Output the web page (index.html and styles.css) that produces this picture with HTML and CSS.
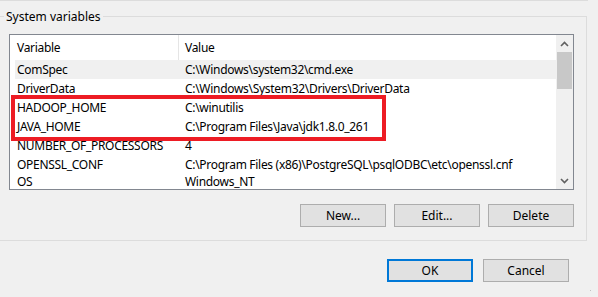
FILE: index.html
```html
<!DOCTYPE html>
<html lang="en">
<head>
    <meta charset="UTF-8">
    <title>Environment Variables</title>
    <link rel="stylesheet" href="styles.css">
</head>
<body>
    <div class="top-rule"></div>

    <fieldset class="group">
        <legend>System variables</legend>

        <div class="listview">
            <div class="lv-main">
                <div class="lv-row lv-head">
                    <span class="cell">Variable</span>
                    <span class="cell cell-value">Value</span>
                </div>
                <div class="lv-row selected">
                    <span class="cell">ComSpec</span>
                    <span class="cell cell-value">C:\Windows\system32\cmd.exe</span>
                </div>
                <div class="lv-row">
                    <span class="cell">DriverData</span>
                    <span class="cell cell-value">C:\Windows\System32\Drivers\DriverData</span>
                </div>
                <div class="lv-row">
                    <span class="cell">HADOOP_HOME</span>
                    <span class="cell cell-value">C:\winutilis</span>
                </div>
                <div class="lv-row">
                    <span class="cell">JAVA_HOME</span>
                    <span class="cell cell-value">C:\Program Files\Java\jdk1.8.0_261</span>
                </div>
                <div class="lv-row">
                    <span class="cell">NUMBER_OF_PROCESSORS</span>
                    <span class="cell cell-value">4</span>
                </div>
                <div class="lv-row">
                    <span class="cell">OPENSSL_CONF</span>
                    <span class="cell cell-value">C:\Program Files (x86)\PostgreSQL\psqlODBC\etc\openssl.cnf</span>
                </div>
                <div class="lv-row lv-last">
                    <span class="cell">OS</span>
                    <span class="cell cell-value">Windows_NT</span>
                </div>
            </div>

            <!-- scrollbar -->
            <div class="scrollbar">
                <div class="sb-arrow">
                    <svg width="9" height="6" viewBox="0 0 9 6"><path d="M1 5 L4.5 1.5 L8 5" fill="none" stroke="#606060" stroke-width="1.6"/></svg>
                </div>
                <div class="sb-track">
                    <div class="sb-thumb"></div>
                </div>
                <div class="sb-arrow">
                    <svg width="9" height="6" viewBox="0 0 9 6"><path d="M1 1 L4.5 4.5 L8 1" fill="none" stroke="#606060" stroke-width="1.6"/></svg>
                </div>
            </div>

            <!-- red highlight drawn over the list -->
            <div class="mark"></div>
        </div>

        <div class="button-row group-buttons">
            <button class="btn">New...</button>
            <button class="btn">Edit...</button>
            <button class="btn">Delete</button>
        </div>
    </fieldset>

    <div class="button-row dialog-buttons">
        <button class="btn btn-default">OK</button>
        <button class="btn">Cancel</button>
    </div>

    <div class="grip"></div>
</body>
</html>
```

FILE: styles.css
```css
body {
    margin: 0;
    width: 598px;
    height: 297px;
    background: #f0f0f0;
    font-family: 'Noto Sans', sans-serif;
    font-size: 12px;
    letter-spacing: -0.3px;
    color: #000;
    overflow: hidden;
    position: relative;
}

.top-rule {
    width: 587px;
    height: 0;
    border-bottom: 1px solid #dcdcdc;
    border-right: 1px solid #dcdcdc;
}

.group {
    margin: 7px 0 0 0;
    width: 587px;
    box-sizing: border-box;
    padding: 0 12px 13px 9px;
    border: 1px solid #dcdcdc;
    border-left: none;
}

.group legend {
    margin-left: -5px;
    padding: 0 2px;
    line-height: 17px;
    letter-spacing: 0;
}

.listview {
    position: relative;
    display: flex;
    height: 156px;
    margin-top: 9px;
    border: 1px solid #828790;
    background: #fff;
    box-sizing: border-box;
}

.lv-main {
    flex: 1;
    overflow: hidden;
    padding-left: 5px;
}

.lv-row {
    display: grid;
    grid-template-columns: 163px 1fr;
    height: 19px;
    line-height: 19px;
    white-space: nowrap;
}

.lv-head {
    height: 25px;
    line-height: 25px;
}

.lv-last {
    line-height: 16px;
}

.lv-head .cell-value {
    border-left: 1px solid #e5e5e5;
    padding-left: 6px;
}

.cell {
    padding-left: 2px;
    overflow: hidden;
}

.cell-value {
    padding-left: 7px;
}

.selected {
    background: #f0f0f0;
}

.scrollbar {
    width: 17px;
    display: flex;
    flex-direction: column;
    background: #f0f0f0;
}

.sb-arrow {
    height: 17px;
    display: flex;
    align-items: center;
    justify-content: center;
}

.sb-track {
    flex: 1;
    padding: 0 1px;
}

.sb-thumb {
    height: 37px;
    background: #c8c8c8;
}

.mark {
    position: absolute;
    left: 1px;
    top: 60px;
    width: 375px;
    height: 46px;
    border: 4px solid #ed1c24;
    box-sizing: border-box;
}

.button-row {
    display: flex;
    justify-content: flex-end;
}

.group-buttons {
    gap: 8px;
    margin-top: 14px;
}

.dialog-buttons {
    gap: 10px;
    margin-top: 18px;
    width: 569px;
}

.btn {
    width: 86px;
    height: 23px;
    background: #e1e1e1;
    border: 1px solid #adadad;
    font-family: inherit;
    font-size: 12px;
    letter-spacing: 0;
    color: #000;
    padding: 0;
}

.btn-default {
    border: 2px solid #0078d7;
}

.grip {
    position: absolute;
    right: 6px;
    bottom: 5px;
    width: 3px;
    height: 3px;
    background: radial-gradient(circle, #c0c0c0 40%, transparent 41%);
}
```
